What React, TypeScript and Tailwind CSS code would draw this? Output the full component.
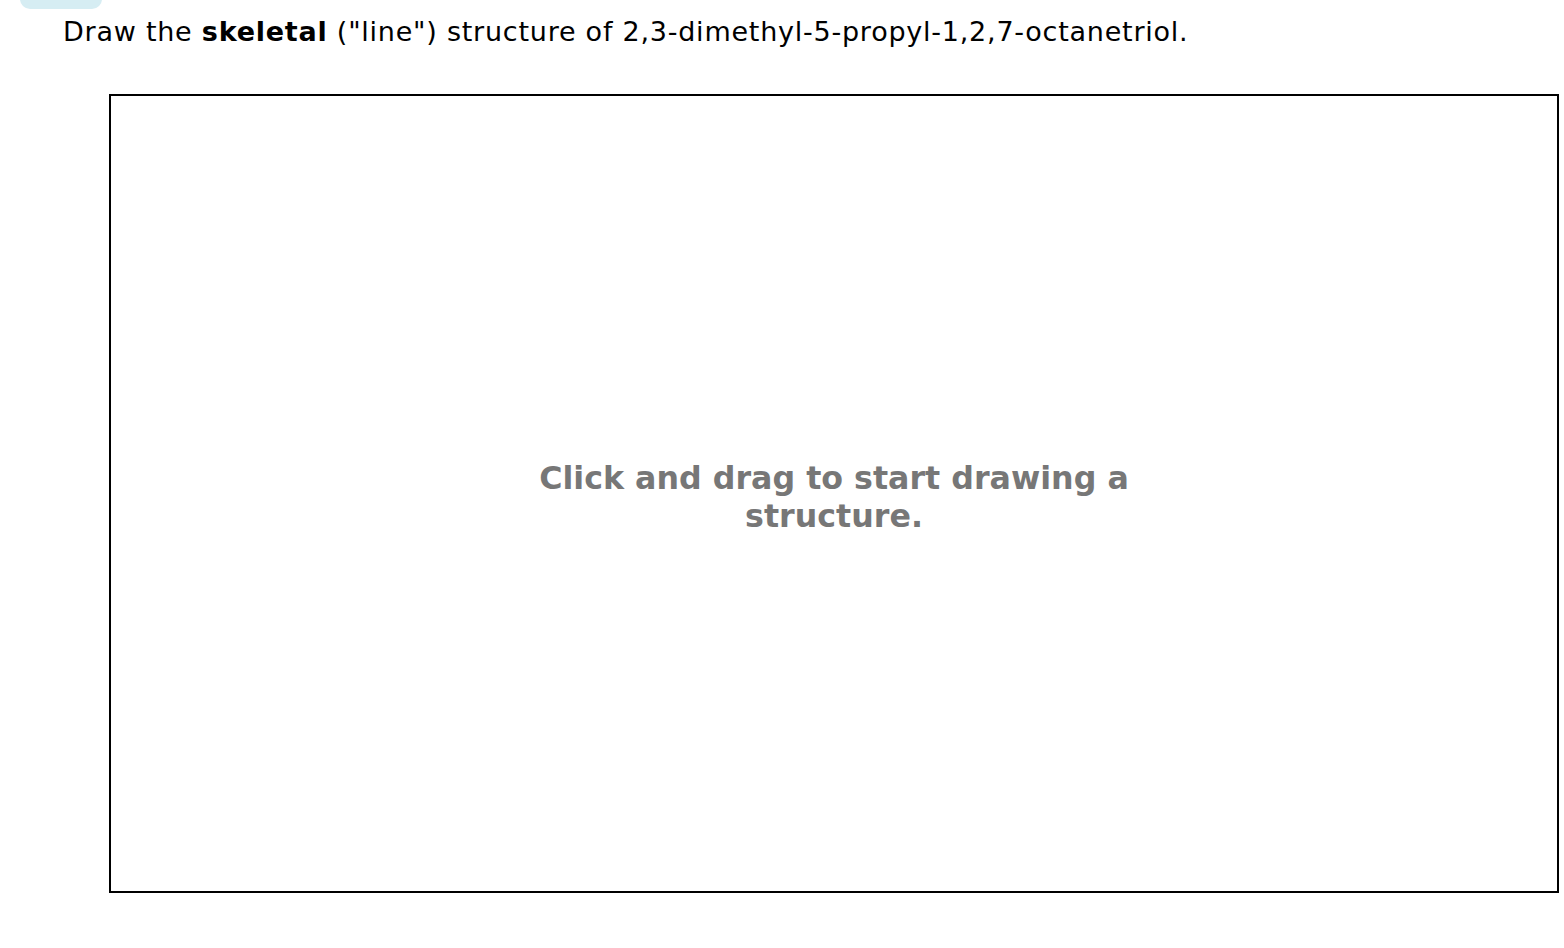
export default function App() {
  return (
    <div className="relative h-[948px] w-[1564px] bg-white font-['DejaVu_Sans',Verdana,sans-serif] text-black">
      <div className="absolute left-[20px] top-[-20px] h-[29px] w-[82px] rounded-[10px] bg-[#d6edf3]" />
      <div className="pl-[63px] pt-[13px]">
        <p className="text-[27px] leading-[37px] tracking-[0.76px]">
          Draw the <b>skeletal</b> ("line") structure of 2,3-dimethyl-5-propyl-1,2,7-octanetriol.
        </p>
      </div>
      <div className="ml-[109px] mt-[44px] flex h-[799px] w-[1450px] items-center justify-center border-2 border-black">
        <p className="mt-[6px] max-w-[640px] text-center text-[31.7px] font-bold leading-[38px] text-[#777777]">
          Click and drag to start drawing a structure.
        </p>
      </div>
    </div>
  );
}
